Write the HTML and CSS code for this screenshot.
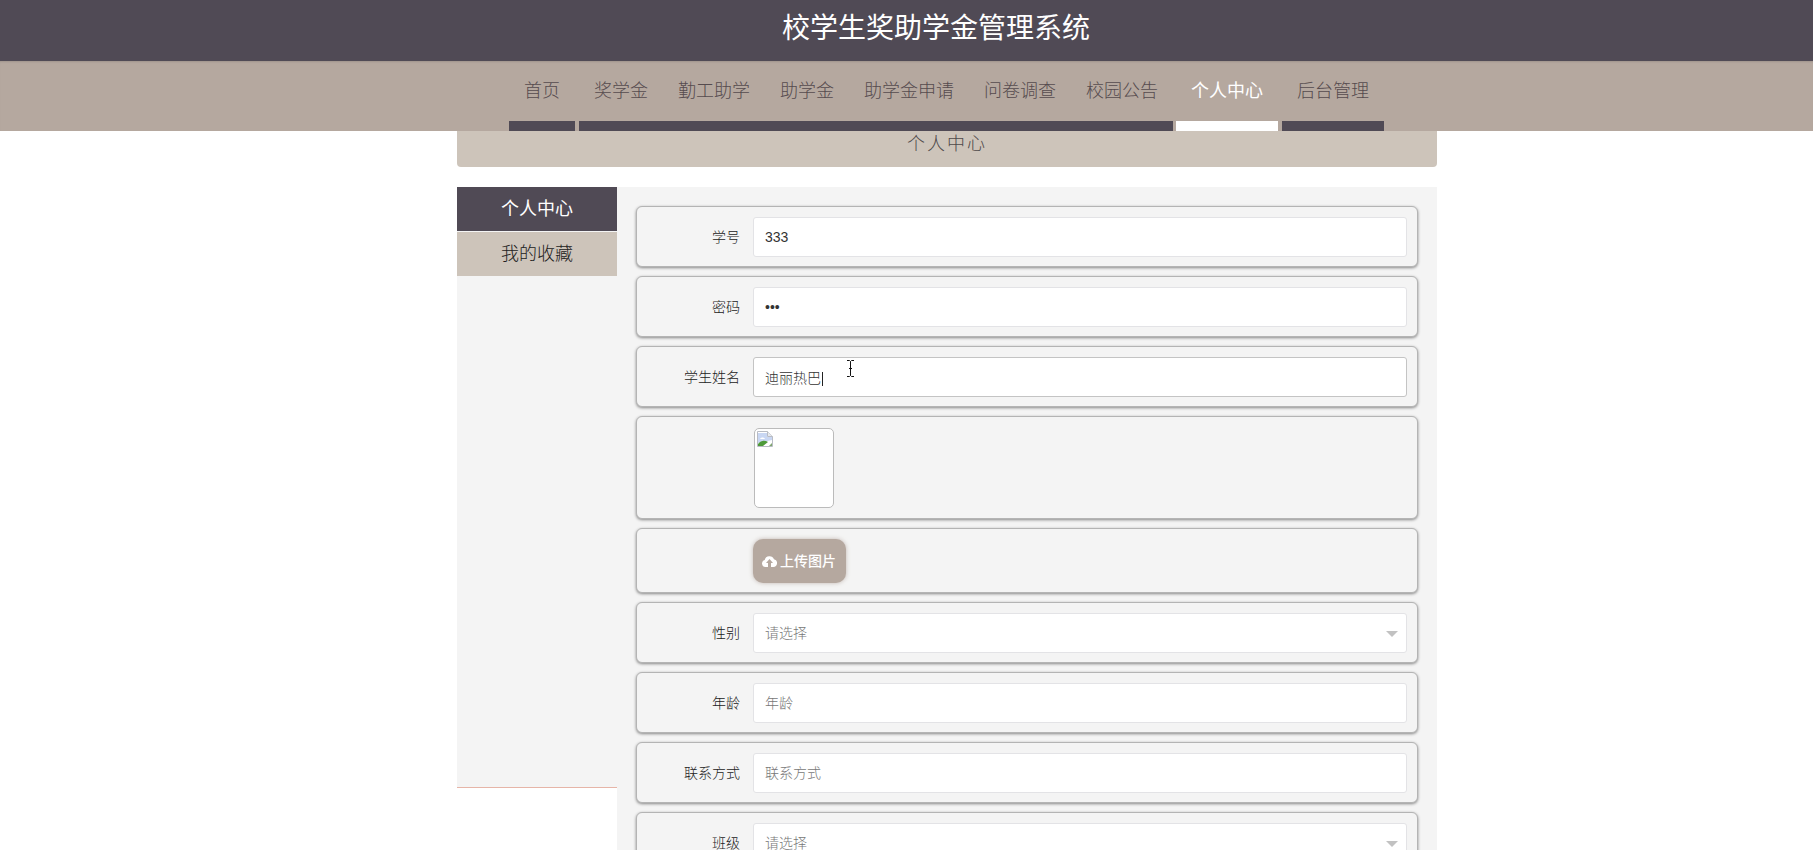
FILE: index.html
```html
<!DOCTYPE html>
<html lang="zh-CN">
<head>
  <meta charset="UTF-8" />
  <meta name="viewport" content="width=device-width, initial-scale=1.0" />
  <title>校学生奖助学金管理系统</title>
  <link rel="stylesheet" href="styles.css">
</head>
<body>
  <header class="header">
    <h1>校学生奖助学金管理系统</h1>
  </header>

  <nav class="nav">
    <a class="nav-item" href="#">首页</a>
    <div class="nav-group">
      <a class="nav-item" href="#">奖学金</a>
      <a class="nav-item" href="#">勤工助学</a>
      <a class="nav-item" href="#">助学金</a>
      <a class="nav-item" href="#">助学金申请</a>
      <a class="nav-item" href="#">问卷调查</a>
      <a class="nav-item" href="#">校园公告</a>
    </div>
    <a class="nav-item active" href="#">个人中心</a>
    <a class="nav-item" href="#">后台管理</a>
  </nav>

  <main class="wrap">
    <div class="page-title">个人中心</div>

    <div class="content">
      <aside class="side">
        <a class="side-item active" href="#">个人中心</a>
        <a class="side-item" href="#">我的收藏</a>
      </aside>

      <form class="panel">
        <div class="row">
          <label class="row-label">学号</label>
          <div class="field"><input class="input" type="text" value="333" /></div>
        </div>
        <div class="row">
          <label class="row-label">密码</label>
          <div class="field"><input class="input" type="password" value="333" /></div>
        </div>
        <div class="row">
          <label class="row-label">学生姓名</label>
          <div class="field">
            <input class="input focus" type="text" value="迪丽热巴" />
            <span class="caret"></span>
            <svg class="ibeam" width="9" height="17" viewBox="0 0 9 17">
              <path d="M1 .5h2.500l1 1 1-1H8M4.500 1.500v14M1 16.500h2.500l1-1 1 1H8M3 8.500h3" fill="none" stroke="#111" stroke-width="1" />
            </svg>
          </div>
        </div>
        <div class="row row-photo">
          <span class="row-label"></span>
          <div class="photo">
            <svg width="16" height="16" viewBox="0 0 16 16">
              <path d="M.5.5h10l5 5v10H.5z" fill="#fff" stroke="#b9bcc4" />
              <path d="M10.500.5v5h5" fill="#e8eaee" stroke="#b9bcc4" />
              <path d="M1 2h9v4h5v3L1 12z" fill="#c9d7f3" />
              <path d="M3 8c1-2 4-2 5 0z" fill="#fff" />
              <path d="M1 15v-2c3-4 7-4 10-2l-5 4z" fill="#4e9a3a" />
              <path d="M12 15l3-3v3z" fill="#7fa56f" />
            </svg>
          </div>
        </div>
        <div class="row row-upload">
          <span class="row-label"></span>
          <button class="upload-btn" type="button">
            <svg width="15" height="12" viewBox="0 0 15 12">
              <path d="M3.600 12A3.500 3.500 0 0 1 2.700 5.100 4.900 4.900 0 0 1 12 4.300 3.900 3.900 0 0 1 11.400 12H9V8h2L7.500 4 4 8h2v4z" fill="#fff" />
            </svg>
            <span class="upload-text">上传图片</span>
          </button>
        </div>
        <div class="row">
          <label class="row-label">性别</label>
          <div class="field select"><input class="input" type="text" placeholder="请选择" readonly /></div>
        </div>
        <div class="row">
          <label class="row-label">年龄</label>
          <div class="field"><input class="input" type="text" placeholder="年龄" /></div>
        </div>
        <div class="row">
          <label class="row-label">联系方式</label>
          <div class="field"><input class="input" type="text" placeholder="联系方式" /></div>
        </div>
        <div class="row">
          <label class="row-label">班级</label>
          <div class="field select"><input class="input" type="text" placeholder="请选择" readonly /></div>
        </div>
      </form>
    </div>
  </main>
</body>
</html>
```

FILE: styles.css
```css
* {
  box-sizing: border-box;
}

body {
  font-family: "Liberation Sans", "Noto Sans CJK SC", sans-serif;
  background-color: #fff;
  margin: 0;
  padding: 0;
  height: 100vh;
  overflow: hidden;
}

a {
  text-decoration: none;
}

.header {
  height: 61px;
  padding-left: 59px;
  background: #504a55;
  text-align: center;
}

.header h1 {
  margin: 0;
  font-size: 28px;
  font-weight: 400;
  line-height: 58px;
  color: #fff;
}

.nav {
  display: flex;
  height: 70px;
  padding-left: 509px;
  background: #b5a89f;
  box-shadow: inset 0 2px 2px -1px rgba(0,0,0,0.12);
}

.nav-group {
  display: flex;
  margin: 0 3px 0 4px;
}

.nav-item {
  height: 70px;
  padding: 0 15px;
  border-bottom: 10px solid #504a55;
  font-size: 18px;
  font-weight: 300;
  line-height: 61px;
  color: #554b4e;
}

.nav-item.active {
  border-bottom-color: #fff;
  font-weight: 400;
  color: #fff;
  margin-right: 4px;
}

.wrap {
  width: 980px;
  margin-left: 457px;
}

.page-title {
  height: 36px;
  background: #cdc4ba;
  border-radius: 0 0 4px 4px;
  font-size: 18px;
  font-weight: 300;
  letter-spacing: 2px;
  line-height: 26px;
  text-align: center;
  color: #4f4a4a;
}

.content {
  display: flex;
  margin-top: 20px;
}

.side {
  width: 160px;
  height: 601px;
  background: #f4f4f4;
  border-bottom: 1px solid #e6b5a8;
}

.side-item {
  display: block;
  height: 44px;
  margin-bottom: 1px;
  background: #cdc4ba;
  font-size: 18px;
  font-weight: 300;
  line-height: 45px;
  text-align: center;
  color: #222;
}

.side-item.active {
  background: #504a55;
  font-weight: 400;
  color: #fff;
}

.panel {
  display: flex;
  flex-direction: column;
  gap: 9px;
  width: 820px;
  height: 700px;
  padding: 19px 19px;
  background: #f4f4f4;
}

.row {
  display: flex;
  flex-shrink: 0;
  align-items: flex-start;
  padding: 10px 10px 9px 0;
  background: #f4f4f4;
  border: 1px solid #b4b4b4;
  border-radius: 6px;
  box-shadow: 0 1px 3px rgba(0,0,0,0.45);
}

.row-photo {
  padding-bottom: 10px;
}

.row-label {
  flex: none;
  width: 103px;
  font-size: 14px;
  font-weight: 300;
  line-height: 40px;
  text-align: right;
  color: #222;
}

.field {
  position: relative;
  flex: 1;
  margin-left: 13px;
}

.input {
  display: block;
  width: 100%;
  height: 40px;
  padding: 0 11px;
  background: #fff;
  border: 1px solid #e3e3e6;
  border-radius: 3px;
  font-family: inherit;
  font-size: 14px;
  font-weight: 300;
  color: #333;
  outline: none;
}

.input::placeholder {
  color: #777;
}

.input.focus {
  border-color: #c4c4c4;
}

.caret {
  position: absolute;
  left: 69px;
  top: 15px;
  width: 1px;
  height: 14px;
  background: #222;
}

.ibeam {
  position: absolute;
  left: 93px;
  top: 3px;
}

.select::after {
  content: "";
  position: absolute;
  right: 9px;
  top: 18px;
  border: 6px solid transparent;
  border-top-color: #c2c2c2;
  border-bottom: 0;
}

.photo {
  width: 80px;
  height: 80px;
  margin-left: 14px;
  margin-top: 1px;
  padding: 1px 0 0 1px;
  background: #fff;
  border: 1px solid #bbb;
  border-radius: 5px;
}

.photo svg {
  display: block;
  margin: 1px 0 0 1px;
}

.upload-btn {
  display: flex;
  align-items: center;
  gap: 3px;
  height: 44px;
  width: 93px;
  margin-left: 13px;
  padding: 0 0 0 9px;
  background: #b5a89f;
  border: none;
  border-radius: 10px;
  box-shadow: 0 0 4px rgba(181,168,159,0.8);
  font-family: inherit;
  font-size: 14px;
  font-weight: 500;
  color: #fff;
}

.upload-text {
  margin-top: -2px;
}
```
